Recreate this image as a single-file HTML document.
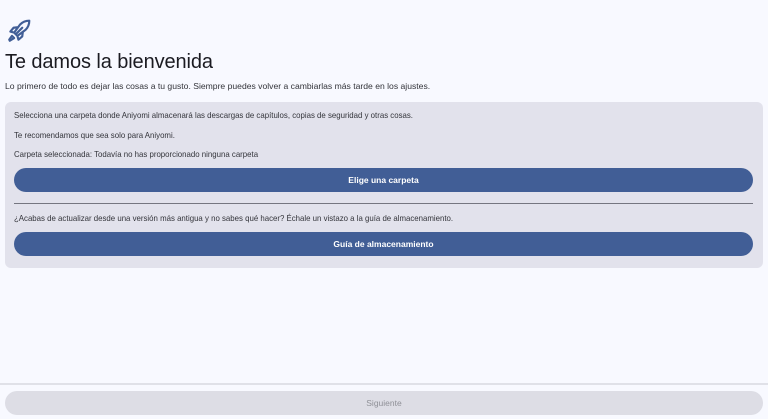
<!DOCTYPE html>
<html><head><meta charset="utf-8"><style>
*{margin:0;padding:0;box-sizing:border-box}
body{width:768px;height:419px;background:#f8f9ff;font-family:"Liberation Sans",sans-serif;color:#1b1b21;position:relative;overflow:hidden}
.abs{position:absolute}
h1{position:absolute;left:5px;top:51px;font-size:20px;font-weight:400;letter-spacing:-0.1px}
.sub{left:5px;top:81px;font-size:8.6px;color:#33343a}
.card{left:5px;top:102px;width:758px;height:166px;background:#e2e2ec;border-radius:6px}
.t{font-size:7.85px;color:#33343a;left:14px}
.btn{left:14px;width:739px;height:24px;border-radius:12px;background:#415e96;color:#fff;font-size:8.5px;font-weight:bold;text-align:center;line-height:24px}
</style></head><body>
<svg class="abs" style="left:6px;top:18px" width="26" height="26" viewBox="0 0 24 24" fill="none" stroke="#415e96" stroke-width="2" stroke-linejoin="round" stroke-linecap="round">
<path d="M9 15 L15 9 M10.5 16.5 L7.5 13.5 L13 6 C16 3 19 2.5 21.5 2.5 C21.5 5 21 8 18 11 Z M7.5 13.5 L4 12.5 L7 9 L11 8.5 M10.5 16.5 L11.5 20 L15 17 L15.5 13"/>
<path d="M5.5 16.5 L3 20 L3.5 21 L7.5 18.5 Z"/>
</svg>
<h1>Te damos la bienvenida</h1>
<div class="abs sub">Lo primero de todo es dejar las cosas a tu gusto. Siempre puedes volver a cambiarlas más tarde en los ajustes.</div>
<div class="abs card"></div>
<div class="abs t" style="top:111px">Selecciona una carpeta donde Aniyomi almacenará las descargas de capítulos, copias de seguridad y otras cosas.</div>
<div class="abs t" style="top:131px">Te recomendamos que sea solo para Aniyomi.</div>
<div class="abs t" style="top:150px">Carpeta seleccionada: Todavía no has proporcionado ninguna carpeta</div>
<div class="abs btn" style="top:168px">Elige una carpeta</div>
<div class="abs" style="left:14px;top:203px;width:739px;height:1px;background:#757680"></div>
<div class="abs t" style="top:214px">¿Acabas de actualizar desde una versión más antigua y no sabes qué hacer? Échale un vistazo a la guía de almacenamiento.</div>
<div class="abs btn" style="top:232px">Guía de almacenamiento</div>
<div class="abs" style="left:0;top:383px;width:768px;height:1.5px;background:#e0e1e8"></div>
<div class="abs" style="left:5px;top:391px;width:758px;height:24px;border-radius:12px;background:#dddde5;color:#8f9097;font-size:8.5px;text-align:center;line-height:24px">Siguiente</div>
</body></html>
